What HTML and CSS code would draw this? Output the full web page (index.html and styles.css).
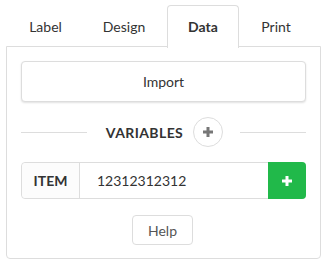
FILE: index.html
```html
<!DOCTYPE html>
<html>
<head>
<meta charset="utf-8">
<link rel="stylesheet" href="styles.css">
</head>
<body>
<div class="wrap">
  <ul class="tabs">
    <li class="tab t-label">Label</li>
    <li class="tab t-design">Design</li>
    <li class="tab t-data active">Data</li>
    <li class="tab t-print">Print</li>
  </ul>
  <div class="panel">
    <button class="btn import">Import</button>
    <div class="divider">
      <span class="line"></span>
      <span class="title">VARIABLES</span>
      <span class="circle"><svg width="12" height="12" viewBox="0 0 12 12"><path d="M6 1v10M1 6h10" stroke="#777" stroke-width="3"/></svg></span>
      <span class="line"></span>
    </div>
    <div class="group">
      <span class="addon">ITEM</span>
      <span class="value">12312312312</span>
      <span class="add"><svg width="12" height="12" viewBox="0 0 12 12"><path d="M6 1v10M1 6h10" stroke="#fff" stroke-width="3"/></svg></span>
    </div>
    <div class="help-row"><button class="btn help">Help</button></div>
  </div>
</div>
</body>
</html>
```
FILE: styles.css
```css
* { box-sizing: border-box; }
body { margin: 0; background: #fff; font-family: Lato, "Open Sans", sans-serif; color: #333; }
.wrap { padding: 5px 5px 0 6px; width: 326px; }
.tabs { list-style: none; margin: 0; padding: 0 0 0 4px; display: flex; height: 42px; }
.tab { font-size: 14px; text-align: center; margin-right: 2px; height: 42px; line-height: 42px; border: 1px solid transparent; border-bottom: none; border-radius: 4px 4px 0 0; color: #333; }
.t-label { width: 71px; }
.t-design { width: 82px; }
.t-data { width: 72px; }
.t-print { width: 70px; }
.tab.active { font-weight: 700; border-color: #ddd; background: #fff; position: relative; z-index: 1; height: 43px; }
.panel { border: 1px solid #ddd; border-radius: 0 0 4px 4px; width: 315px; height: 213px; margin-top: -1px; padding: 14px 14px 0 14px; }
.btn { font-family: Lato, sans-serif; font-size: 14px; background: #fff; border: 1px solid #ddd; border-radius: 4px; color: #333; }
.import { display: block; width: 285px; height: 41px; box-shadow: 0 1px 2px rgba(0,0,0,0.12); }
.divider { display: flex; align-items: center; height: 30px; margin-top: 15px; }
.line { flex: 1; height: 1px; background: #ddd; }
.title { font-weight: 700; font-size: 14px; letter-spacing: 0.4px; margin: 0 10px 0 19px; }
.circle { width: 30px; height: 30px; border-radius: 50%; border: 1px solid #ddd; display: flex; align-items: center; justify-content: center; margin-right: 17px; }
.group { display: flex; height: 37px; margin-top: 15px; border: 1px solid #ddd; border-radius: 4px; }
.addon { width: 58px; display: flex; align-items: center; justify-content: center; font-weight: 700; font-size: 14px; border-right: 1px solid #ddd; background: #fcfcfc; border-radius: 4px 0 0 4px; }
.value { flex: 1; display: flex; align-items: center; padding-left: 17px; font-size: 14px; }
.add { width: 38px; margin: -1px -1px -1px 0; background: #21b94a; border-radius: 0 4px 4px 0; display: flex; align-items: center; justify-content: center; }
.help-row { display: flex; justify-content: center; margin-top: 16px; }
.help { width: 61px; height: 30px; color: #555; margin-left: -2px; }
```
